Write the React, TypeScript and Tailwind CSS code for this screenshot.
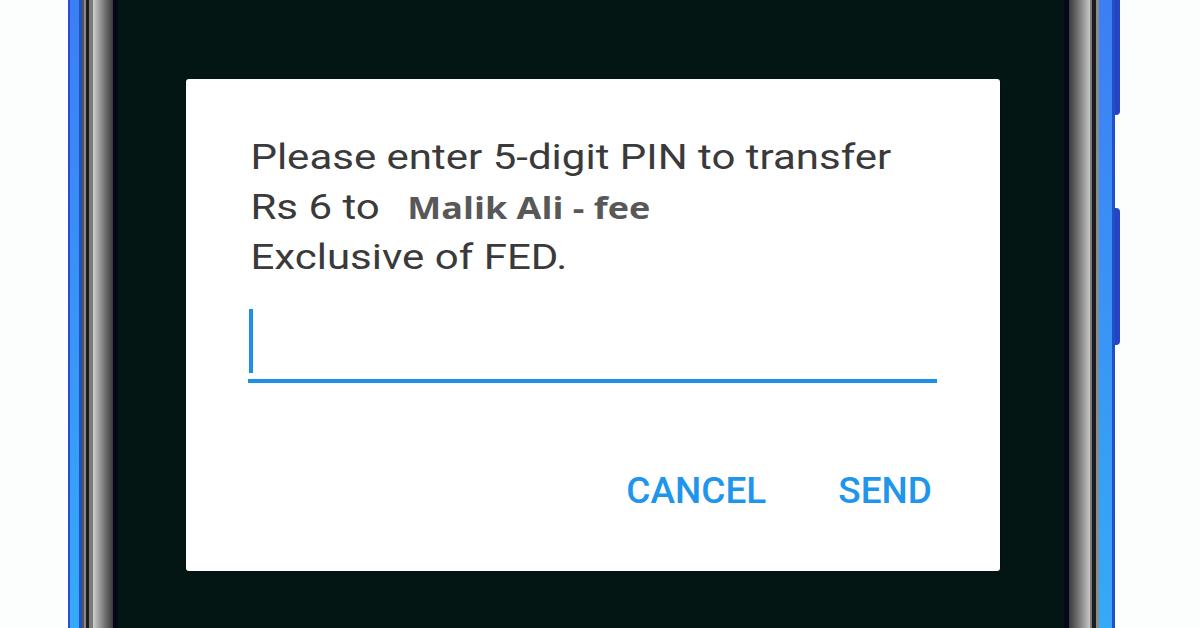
import React from 'react'

// Полоски рамки телефона слева и справа
function LeftBezel() {
  return (
    <div className="flex h-full shrink-0">
      <div className="w-[2px] bg-[#2b4cd0]" />
      <div className="w-[9px] bg-gradient-to-b from-[#3c7ef4] to-[#35aaf7]" />
      <div className="w-[3px] bg-[#2150c4]" />
      <div className="w-[2px] bg-[#555555]" />
      <div className="w-[2px] bg-[#8a8a8a]" />
      <div className="w-[3px] bg-[#1c1c1c]" />
      <div className="w-[4px] bg-[#7a7a7a]" />
      <div className="w-[20px] bg-gradient-to-r from-[#cfcfcf] to-[#3a3a3a]" />
      <div className="w-[5px] bg-[#06061c]" />
    </div>
  )
}

function RightBezel() {
  return (
    <div className="flex h-full shrink-0">
      <div className="w-[5px] bg-[#06061c]" />
      <div className="w-[21px] bg-gradient-to-r from-[#3a3a3a] to-[#c9c9c9]" />
      <div className="w-[2px] bg-[#7a7a7a]" />
      <div className="w-[4px] bg-[#1c1c1c]" />
      <div className="w-[3px] bg-[#8a8a8a]" />
      <div className="w-[13px] bg-gradient-to-b from-[#3c7ef4] to-[#35aaf7]" />
      <div className="w-[3px] bg-[#2150c4]" />
      {/* боковые кнопки */}
      <div className="flex w-[5px] flex-col">
        <div className="h-[115px] rounded-br-sm bg-[#2444c4]" />
        <div className="h-[93px]" />
        <div className="h-[137px] rounded-r-sm bg-[#2444c4]" />
      </div>
    </div>
  )
}

function PinDialog() {
  return (
    <div className="flex h-[492px] w-[814px] flex-col rounded-[3px] bg-white pl-[62px] pr-[63px] pt-[54px] shadow-sm">
      {/* текст на скриншоте растянут по горизонтали */}
      <div
        className="origin-left scale-x-120 text-[35px] leading-[50px] text-[#3a3a3a]"
        style={{ fontFamily: 'Roboto, "Liberation Sans", sans-serif' }}
      >
        <div className="whitespace-nowrap pl-[2px]">Please enter 5-digit PIN to transfer</div>
        <div className="whitespace-nowrap pl-[2px]">
          Rs 6 to
          <span
            className="ml-[23px] text-[30px] font-bold text-[#585858]"
            style={{ fontFamily: '"Open Sans", "Noto Sans", sans-serif' }}
          >
            Malik Ali - fee
          </span>
        </div>
        <div className="whitespace-nowrap pl-[2px]">Exclusive of FED.</div>
      </div>

      <div className="mt-[26px] flex flex-col">
        <div className="ml-[1px] h-[64px] w-[4px] bg-[#1d8fe6]" />
        <div className="mt-[6px] h-[4px] w-full bg-[#1d8fe6]" />
      </div>

      <div
        className="mt-[90px] flex justify-end gap-[72px] pr-[5px] text-[37px] font-medium leading-[36px] text-[#1f95ec]"
        style={{ fontFamily: 'Roboto, "Liberation Sans", sans-serif' }}
      >
        <span>CANCEL</span>
        <span>SEND</span>
      </div>
    </div>
  )
}

export default function App() {
  return (
    <div className="flex h-[628px] w-[1200px] overflow-hidden bg-[#fcfdfd]">
      <div className="w-[68px] shrink-0" />
      <LeftBezel />
      <div className="h-full w-[946px] shrink-0 bg-[#041614] pl-[68px] pt-[79px]">
        <PinDialog />
      </div>
      <RightBezel />
    </div>
  )
}
